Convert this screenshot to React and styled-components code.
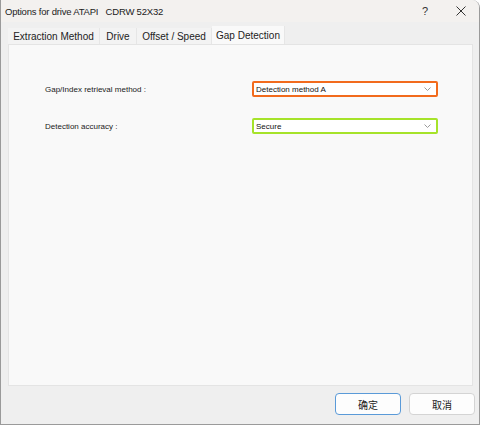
import React from "react";
import styled, { createGlobalStyle } from "styled-components";

const GlobalStyle = createGlobalStyle`
  html, body {
    margin: 0;
    padding: 0;
    background: #ffffff;
  }
  * {
    box-sizing: border-box;
  }
`;

const Window = styled.div`
  width: 480px;
  height: 425px;
  display: flex;
  flex-direction: column;
  background: #efefef;
  border: 1px solid #9a9a9a;
  border-top: none;
  border-top-right-radius: 8px;
  font-family: "Liberation Sans", Arial, sans-serif;
  color: #1b1b1b;
  overflow: hidden;
`;

const TitleBar = styled.div`
  height: 22px;
  display: flex;
  align-items: center;
  padding-left: 4px;
  background: #f3f1ef;
  font-size: 9.5px;
  letter-spacing: -0.2px;
`;

const Title = styled.div`
  flex: 1;
  white-space: pre;
`;

const TitleButton = styled.div`
  width: 36px;
  height: 22px;
  display: flex;
  align-items: center;
  justify-content: center;
  font-size: 11px;
  color: #333;
`;

const Body = styled.div`
  flex: 1;
  display: flex;
  flex-direction: column;
  padding: 5px 6px 0 7px;
`;

const TabStrip = styled.div`
  display: flex;
  align-items: flex-end;
  height: 17px;
`;

const Tab = styled.div`
  width: ${(p) => p.$w}px;
  height: ${(p) => (p.$active ? "19px" : "16px")};
  display: flex;
  align-items: center;
  justify-content: center;
  font-size: 10px;
  color: #222;
  background: ${(p) => (p.$active ? "#f9f9f9" : "#f3f3f3")};
  border-right: 1px solid #e6e6e6;
  margin-bottom: ${(p) => (p.$active ? "-1px" : "0")};
`;

const Panel = styled.div`
  height: 342px;
  background: #f9f9f9;
  border: 1px solid #e4e4e4;
  padding: 36px 0 0 36px;
  display: flex;
  flex-direction: column;
  gap: 21px;
`;

const Row = styled.div`
  display: flex;
  align-items: center;
  height: 16px;
`;

const Label = styled.div`
  width: 207px;
  font-size: 8px;
  color: #1a1a1a;
`;

const Combo = styled.div`
  width: 186px;
  height: 16px;
  display: flex;
  align-items: center;
  justify-content: space-between;
  padding: 0 5px 0 2px;
  background: #ffffff;
  border: 2px solid ${(p) => p.$color};
  border-radius: 2px;
  font-size: 8px;
  color: #111;
`;

const Footer = styled.div`
  flex: 1;
  display: flex;
  justify-content: flex-end;
  align-items: flex-start;
  gap: 8px;
  padding-top: 7px;
  margin-right: -2px;
`;

const Button = styled.button`
  width: 66px;
  height: 22px;
  border-radius: 4px;
  background: #fdfdfd;
  border: 1px solid ${(p) => (p.$default ? "#5a9ad8" : "#d4d4d4")};
  font-family: "Noto Sans CJK SC", "Liberation Sans", sans-serif;
  font-size: 10px;
  color: #1a1a1a;
  padding: 0;
`;

const Chevron = () => (
  <svg width="7" height="4" viewBox="0 0 7 4">
    <path d="M0.5 0.5 L3.5 3.5 L6.5 0.5" fill="none" stroke="#9a9a9a" strokeWidth="1" />
  </svg>
);

const CloseIcon = () => (
  <svg width="10" height="10" viewBox="0 0 10 10">
    <path d="M0.5 0.5 L9.5 9.5 M9.5 0.5 L0.5 9.5" stroke="#333" strokeWidth="1" />
  </svg>
);

const tabs = [
  { label: "Extraction Method", w: 92 },
  { label: "Drive", w: 37 },
  { label: "Offset / Speed", w: 75 },
  { label: "Gap Detection", w: 73 },
];

export default function App() {
  return (
    <>
      <GlobalStyle />
      <Window>
        <TitleBar>
          <Title>Options for drive ATAPI   CDRW 52X32</Title>
          <TitleButton>?</TitleButton>
          <TitleButton>
            <CloseIcon />
          </TitleButton>
        </TitleBar>
        <Body>
          <TabStrip>
            {tabs.map((t) => (
              <Tab key={t.label} $w={t.w} $active={t.label === "Gap Detection"}>
                {t.label}
              </Tab>
            ))}
          </TabStrip>
          <Panel>
            <Row>
              <Label>Gap/Index retrieval method :</Label>
              <Combo $color="#f26b1d">
                <span>Detection method A</span>
                <Chevron />
              </Combo>
            </Row>
            <Row>
              <Label>Detection accuracy :</Label>
              <Combo $color="#a6e32a">
                <span>Secure</span>
                <Chevron />
              </Combo>
            </Row>
          </Panel>
          <Footer>
            <Button $default>确定</Button>
            <Button>取消</Button>
          </Footer>
        </Body>
      </Window>
    </>
  );
}
